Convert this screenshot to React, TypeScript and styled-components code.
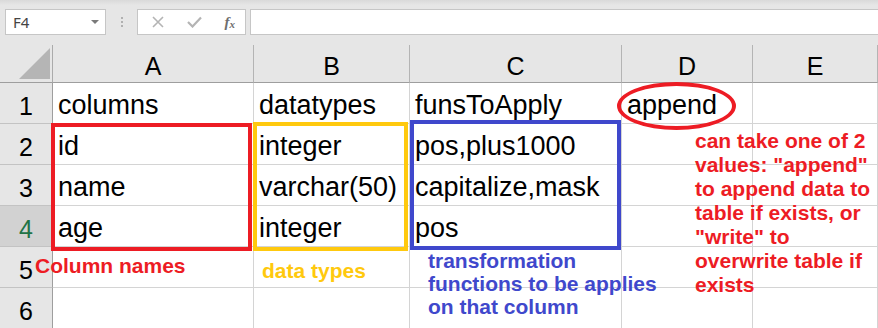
import React from "react";
import styled, { createGlobalStyle } from "styled-components";

const GlobalStyle = createGlobalStyle`
  html, body {
    margin: 0;
    padding: 0;
    background: #ffffff;
    overflow: hidden;
  }
`;

const cols = ["A", "B", "C", "D", "E"];
const rows = [
  ["columns", "datatypes", "funsToApply", "append", ""],
  ["id", "integer", "pos,plus1000", "", ""],
  ["name", "varchar(50)", "capitalize,mask", "", ""],
  ["age", "integer", "pos", "", ""],
  ["", "", "", "", ""],
  ["", "", "", "", ""],
];
const selectedRow = 4;

const RED = "#ed1c24";
const YELLOW = "#ffc90e";
const BLUE = "#3f48cc";

export default function App() {
  return (
    <>
      <GlobalStyle />
      <Page>
        <TopBar>
          <NameBox>
            <span>F4</span>
            <DropArrow />
          </NameBox>
          <Grip>
            <i />
            <i />
            <i />
          </Grip>
          <FormulaButtons>
            <svg width="12" height="12" viewBox="0 0 12 12">
              <path d="M1 1 L11 11 M11 1 L1 11" stroke="#b4b4b4" strokeWidth="1.6" />
            </svg>
            <svg width="15" height="12" viewBox="0 0 15 12">
              <path d="M1 6 L5.5 10.5 L14 1.5" stroke="#b4b4b4" strokeWidth="2.2" fill="none" />
            </svg>
            <Fx>
              f<sub>x</sub>
            </Fx>
          </FormulaButtons>
          <FormulaInput />
        </TopBar>

        <Sheet>
          <Corner>
            <svg width="31" height="31" viewBox="0 0 31 31">
              <polygon points="31,0 31,31 0,31" fill="#b5b5b5" />
            </svg>
          </Corner>
          {cols.map((c) => (
            <ColHead key={c}>{c}</ColHead>
          ))}
          {rows.map((r, i) => (
            <React.Fragment key={i}>
              <RowHead $active={i + 1 === selectedRow}>{i + 1}</RowHead>
              {r.map((v, j) => (
                <Cell key={j}>{v}</Cell>
              ))}
            </React.Fragment>
          ))}
        </Sheet>

        {/* hand-drawn annotations over the sheet */}
        <Frame $color={RED} style={{ left: 51, top: 123, width: 201, height: 128 }} />
        <Frame $color={YELLOW} style={{ left: 253, top: 122, width: 155, height: 129 }} />
        <Frame $color={BLUE} style={{ left: 410, top: 120, width: 211, height: 130 }} />
        <Ring />

        <Note $color={RED} style={{ left: 35, top: 254 }}>
          Column names
        </Note>
        <Note $color={YELLOW} style={{ left: 262, top: 259 }}>
          data types
        </Note>
        <Note $color={BLUE} $lh={23} style={{ left: 428, top: 249 }}>
          transformation
          <br />
          functions to be applies
          <br />
          on that column
        </Note>
        <Note $color={RED} style={{ left: 695, top: 129 }}>
          can take one of 2
          <br />
          values: "append"
          <br />
          to append data to
          <br />
          table if exists, or
          <br />
          "write" to
          <br />
          overwrite table if
          <br />
          exists
        </Note>
      </Page>
    </>
  );
}

const Page = styled.div`
  position: relative;
  width: 878px;
  height: 328px;
  overflow: hidden;
  background: #ffffff;
  font-family: "Liberation Sans", Arial, sans-serif;
`;

const TopBar = styled.div`
  height: 45px;
  box-sizing: border-box;
  padding: 9px 0 10px 5px;
  display: flex;
  background: linear-gradient(#d9d9d9 0px, #e6e6e6 5px, #e6e6e6 100%);
`;

const NameBox = styled.div`
  width: 101px;
  box-sizing: border-box;
  background: #ffffff;
  border: 1px solid #c6c6c6;
  display: flex;
  align-items: center;
  justify-content: space-between;
  padding: 0 6px 0 7px;
  font-family: "Noto Sans", "Liberation Sans", sans-serif;
  font-size: 15px;
  color: #444444;
`;

const DropArrow = styled.span`
  width: 0;
  height: 0;
  border-left: 4px solid transparent;
  border-right: 4px solid transparent;
  border-top: 4px solid #7a7a7a;
`;

const Grip = styled.div`
  width: 31px;
  display: flex;
  flex-direction: column;
  align-items: center;
  justify-content: center;
  gap: 2px;

  i {
    display: block;
    width: 2px;
    height: 2px;
    background: #b0b0b0;
  }
`;

const FormulaButtons = styled.div`
  width: 109px;
  box-sizing: border-box;
  background: #ffffff;
  border: 1px solid #c6c6c6;
  display: flex;
  align-items: center;
  justify-content: space-between;
  padding: 0 10px 0 14px;
`;

const Fx = styled.span`
  font-family: "Liberation Serif", serif;
  font-style: italic;
  font-size: 15px;
  color: #6e6e6e;
  font-weight: bold;

  sub {
    font-size: 11px;
    vertical-align: -1px;
  }
`;

const FormulaInput = styled.div`
  flex: 1;
  margin-left: 4px;
  background: #ffffff;
  border: 1px solid #c6c6c6;
  border-right: none;
`;

const Sheet = styled.div`
  display: grid;
  grid-template-columns: 53px 201px 156px 212px 131px 1fr;
  grid-template-rows: 38px repeat(6, 41px);
  font-size: 27px;
  color: #000000;
`;

const Corner = styled.div`
  background: #e6e6e6;
  border-right: 1px solid #ababab;
  border-bottom: 1px solid #9e9e9e;
  display: flex;
  align-items: flex-end;
  justify-content: flex-end;
  padding: 0 2px 3px 0;
`;

const ColHead = styled.div`
  background: #e6e6e6;
  border-right: 1px solid #b4b4b4;
  border-bottom: 1px solid #9e9e9e;
  display: flex;
  align-items: flex-end;
  justify-content: center;
  padding-bottom: 1px;
  font-size: 25px;
`;

const RowHead = styled.div<{ $active?: boolean }>`
  background: ${(p) => (p.$active ? "#d2d2d2" : "#e6e6e6")};
  color: ${(p) => (p.$active ? "#217346" : "#000000")};
  border-right: 1px solid #9e9e9e;
  border-bottom: 1px solid #c3c3c3;
  display: flex;
  align-items: flex-end;
  justify-content: center;
  padding-bottom: 2px;
  font-size: 25px;
`;

const Cell = styled.div`
  border-right: 1px solid #d4d4d4;
  border-bottom: 1px solid #d4d4d4;
  display: flex;
  align-items: flex-end;
  padding: 0 0 2px 5px;
  white-space: nowrap;
  overflow: visible;
`;

const Frame = styled.div<{ $color: string }>`
  position: absolute;
  box-sizing: border-box;
  border: 4px solid ${(p) => p.$color};
  pointer-events: none;
`;

const Ring = styled.div`
  position: absolute;
  left: 617px;
  top: 82px;
  width: 119px;
  height: 48px;
  box-sizing: border-box;
  border: 4px solid ${RED};
  border-radius: 50%;
`;

const Note = styled.div<{ $color: string; $lh?: number }>`
  position: absolute;
  font-family: "Liberation Sans", Arial, sans-serif;
  font-weight: bold;
  font-size: 21px;
  line-height: ${(p) => p.$lh ?? 24}px;
  color: ${(p) => p.$color};
  white-space: nowrap;
`;
